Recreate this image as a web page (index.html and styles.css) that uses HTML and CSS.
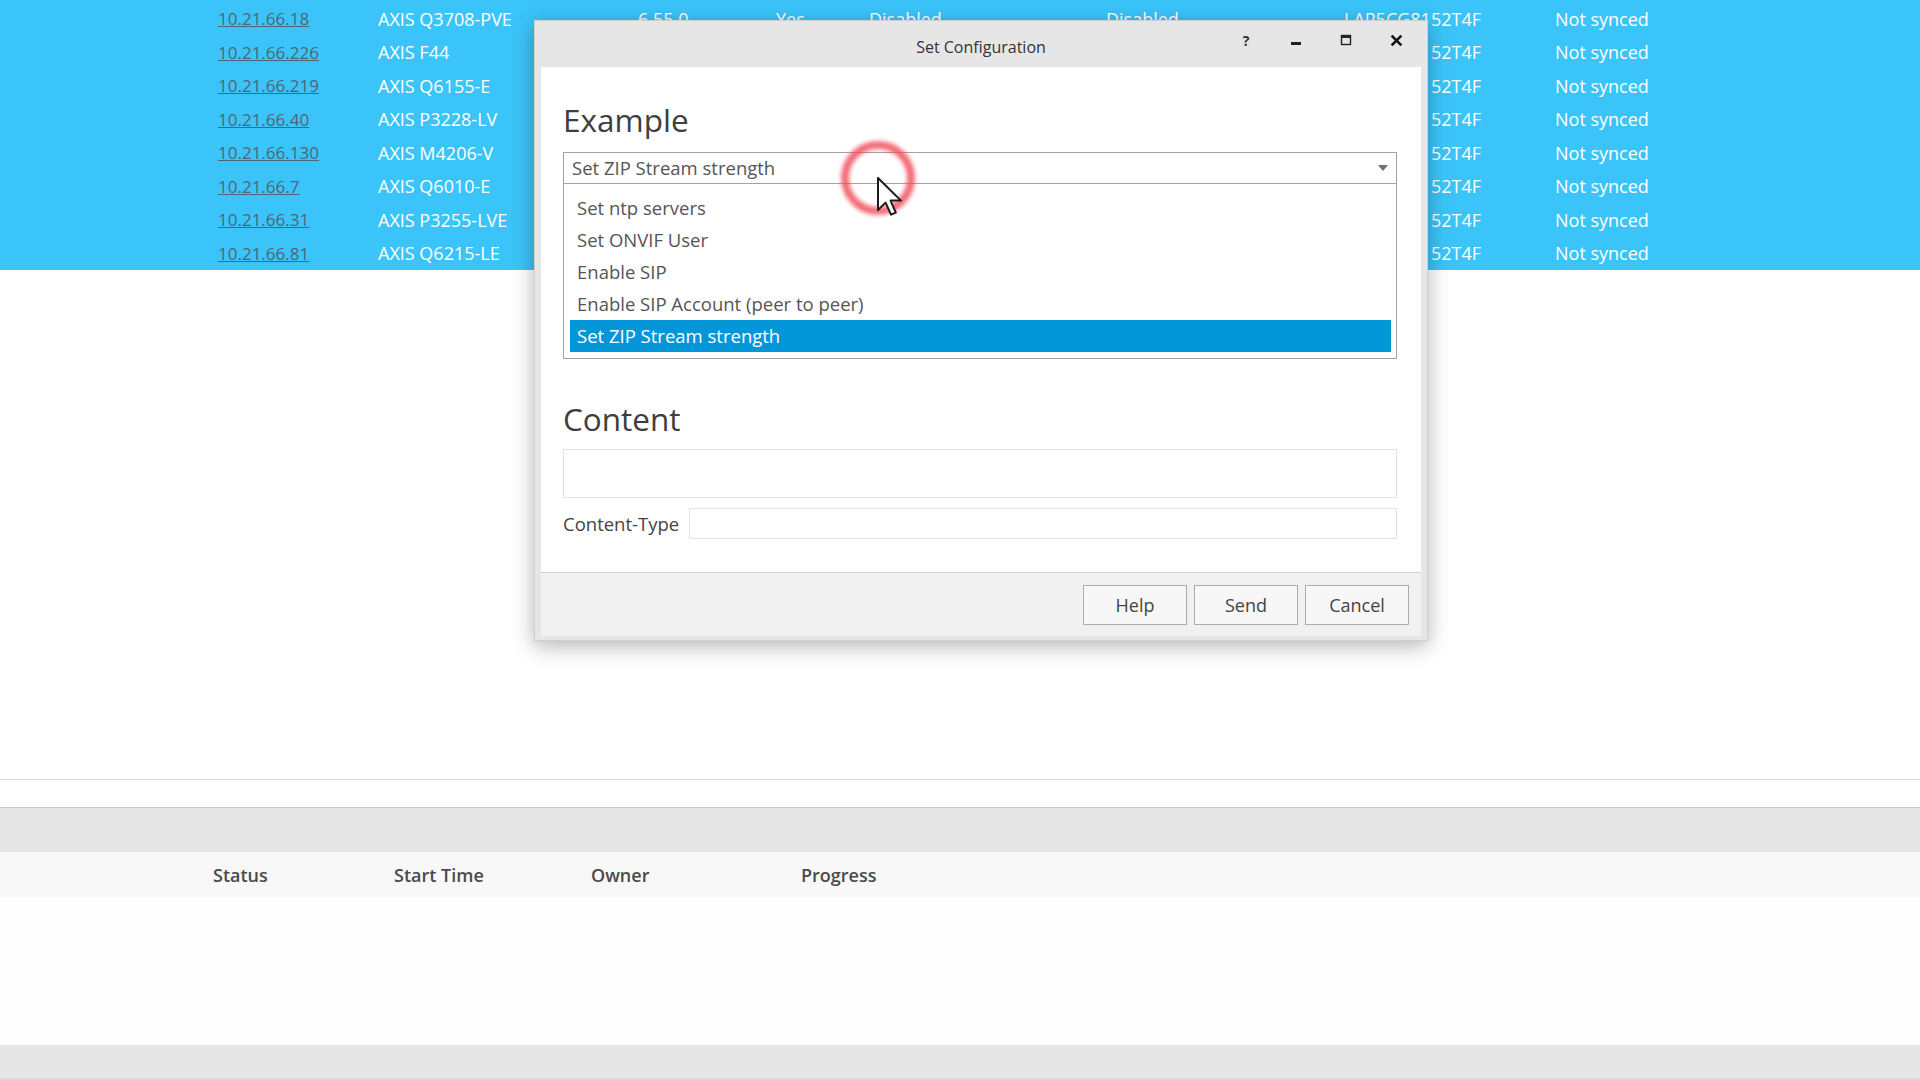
FILE: index.html
```html
<!DOCTYPE html>
<html lang="en">
<head>
    <meta charset="UTF-8">
    <meta name="viewport" content="width=device-width, initial-scale=1.0">
    <title>Device Manager - Set Configuration</title>
    <link rel="stylesheet" href="styles.css">
</head>
<body>
    <div class="app">
        <div class="devices">
            <div class="row">
                <a class="ip">10.21.66.18</a><span>AXIS Q3708-PVE</span><span>6.55.0</span><span>Yes</span><span>Disabled</span><span>Disabled</span><span>LAP5CG8152T4F</span><span>Not synced</span>
            </div>
            <div class="row">
                <a class="ip">10.21.66.226</a><span>AXIS F44</span><span>6.55.0</span><span>Yes</span><span>Disabled</span><span>Disabled</span><span>LAP5CG8152T4F</span><span>Not synced</span>
            </div>
            <div class="row">
                <a class="ip">10.21.66.219</a><span>AXIS Q6155-E</span><span>6.55.0</span><span>Yes</span><span>Disabled</span><span>Disabled</span><span>LAP5CG8152T4F</span><span>Not synced</span>
            </div>
            <div class="row">
                <a class="ip">10.21.66.40</a><span>AXIS P3228-LV</span><span>6.55.0</span><span>Yes</span><span>Disabled</span><span>Disabled</span><span>LAP5CG8152T4F</span><span>Not synced</span>
            </div>
            <div class="row">
                <a class="ip">10.21.66.130</a><span>AXIS M4206-V</span><span>6.55.0</span><span>Yes</span><span>Disabled</span><span>Disabled</span><span>LAP5CG8152T4F</span><span>Not synced</span>
            </div>
            <div class="row">
                <a class="ip">10.21.66.7</a><span>AXIS Q6010-E</span><span>6.55.0</span><span>Yes</span><span>Disabled</span><span>Disabled</span><span>LAP5CG8152T4F</span><span>Not synced</span>
            </div>
            <div class="row">
                <a class="ip">10.21.66.31</a><span>AXIS P3255-LVE</span><span>6.55.0</span><span>Yes</span><span>Disabled</span><span>Disabled</span><span>LAP5CG8152T4F</span><span>Not synced</span>
            </div>
            <div class="row">
                <a class="ip">10.21.66.81</a><span>AXIS Q6215-LE</span><span>6.55.0</span><span>Yes</span><span>Disabled</span><span>Disabled</span><span>LAP5CG8152T4F</span><span>Not synced</span>
            </div>
        </div>
        <div class="blank"></div>
        <div class="gap"></div>
        <div class="toolbar"></div>
        <div class="jobs-header">
            <span>Status</span><span>Start Time</span><span>Owner</span><span>Progress</span>
        </div>
        <div class="jobs-body"></div>
        <div class="statusbar"></div>
    </div>

    <div class="dialog">
        <div class="titlebar">
            <span class="title">Set Configuration</span>
            <div class="title-buttons">
                <span class="tb-btn tb-help">?</span>
                <span class="tb-btn">
                    <svg width="12" height="12" viewBox="0 0 12 12"><rect x="1" y="8" width="10" height="3" fill="#222"/></svg>
                </span>
                <span class="tb-btn">
                    <svg width="12" height="12" viewBox="0 0 12 12"><rect x="1.5" y="1.5" width="9" height="9" fill="none" stroke="#222" stroke-width="1.4"/><rect x="1" y="1" width="10" height="3" fill="#222"/></svg>
                </span>
                <span class="tb-btn">
                    <svg width="13" height="13" viewBox="0 0 12 12"><path d="M1.5 1.5 L10.5 10.5 M10.5 1.5 L1.5 10.5" stroke="#111" stroke-width="2.4"/></svg>
                </span>
            </div>
        </div>
        <div class="dlg-body">
            <h2>Example</h2>
            <div class="combo">
                <span>Set ZIP Stream strength</span>
                <svg class="combo-arrow" width="10" height="6" viewBox="0 0 10 6"><path d="M0 0 L10 0 L5 6 Z" fill="#707070"/></svg>
            </div>
            <ul class="combo-list">
                <li>Set ntp servers</li>
                <li>Set ONVIF User</li>
                <li>Enable SIP</li>
                <li>Enable SIP Account (peer to peer)</li>
                <li class="selected">Set ZIP Stream strength</li>
            </ul>
            <h2 class="content-heading">Content</h2>
            <div class="textarea"></div>
            <div class="field">
                <label>Content-Type</label>
                <div class="input"></div>
            </div>
        </div>
        <div class="dlg-footer">
            <button>Help</button>
            <button>Send</button>
            <button>Cancel</button>
        </div>
    </div>

    <div class="pointer">
        <div class="ring"></div>
        <svg class="arrow" width="26" height="40" viewBox="0 0 13 20">
            <path d="M0.5 0.5 L0.5 16.5 L4.3 12.8 L7 18.8 L9.4 17.8 L6.8 11.8 L12 11.8 Z" fill="#fff" stroke="#1a1a1a" stroke-width="1" stroke-linejoin="round"/>
        </svg>
    </div>
</body>
</html>
```

FILE: styles.css
```css
body {
    margin: 0;
    font-family: 'Open Sans', 'Noto Sans', Arial, sans-serif;
    background: #fff;
    color: #444;
    overflow: hidden;
}
.app {
    width: 1920px;
    height: 1080px;
    display: flex;
    flex-direction: column;
}
.devices {
    height: 268px;
    padding-top: 2px;
    background: #3bc4f9;
}
.row {
    display: grid;
    grid-template-columns: 160px 260px 138px 93px 237px 238px 211px auto;
    height: 33.5px;
    align-items: center;
    padding-left: 218px;
    font-size: 18px;
    color: #fff;
    white-space: nowrap;
}
.ip {
    color: #4d6677;
    text-decoration: underline;
    font-size: 17px;
}
.blank {
    height: 509px;
    border-bottom: 1px solid #d6d6d6;
}
.gap {
    height: 27px;
    border-bottom: 1px solid #c6c6c6;
}
.toolbar {
    height: 44px;
    background: #e6e6e6;
}
.jobs-header {
    height: 45px;
    background: #f8f8f8;
    display: flex;
    align-items: center;
    font-size: 18px;
    font-weight: 600;
    color: #4a4a4a;
}
.jobs-header span:nth-child(1) { margin-left: 213px; width: 181px; }
.jobs-header span:nth-child(2) { width: 197px; }
.jobs-header span:nth-child(3) { width: 210px; }
.jobs-body {
    height: 148px;
    background: #fefefe;
}
.statusbar {
    flex: 1;
    background: #e6e6e6;
    border-bottom: 2px solid #d8d8d8;
}

/* dialog */
.dialog {
    position: absolute;
    left: 534px;
    top: 20px;
    width: 880px;
    padding: 0 6px 4px 6px;
    background: #e6e6e6;
    border: 1px solid #cfcfcf;
    box-shadow: 0 5px 20px rgba(0,0,0,0.3);
}
.titlebar {
    height: 46px;
    display: flex;
    align-items: center;
    justify-content: center;
    position: relative;
}
.title {
    font-size: 16px;
    color: #333;
    margin-top: 5px;
}
.title-buttons {
    position: absolute;
    right: 0;
    top: 9px;
    display: flex;
    align-items: center;
}
.tb-btn {
    width: 50px;
    height: 20px;
    display: flex;
    align-items: center;
    justify-content: center;
}
.tb-help {
    font-size: 14px;
    font-weight: 700;
    color: #333;
}
.dlg-body {
    background: #fff;
    padding: 33px 24px 33px 22px;
}
h2 {
    margin: 0;
    height: 40px;
    line-height: 40px;
    font-size: 31.5px;
    font-weight: 400;
    color: #3e3e3e;
}
.combo {
    margin-top: 12px;
    height: 30px;
    border: 1px solid #a3a3a3;
    display: flex;
    align-items: center;
    justify-content: space-between;
    padding: 0 8px;
    font-size: 18.5px;
    color: #555;
}
.combo span {
    margin-top: -2px;
}
.combo-list {
    list-style: none;
    margin: 0;
    padding: 8px 5px 6px 6px;
    border: 1px solid #a3a3a3;
    border-top: none;
    font-size: 18.5px;
    color: #555;
}
.combo-list li {
    height: 32px;
    line-height: 32px;
    padding-left: 7px;
}
.combo-list li.selected {
    background: #0296d8;
    color: #fff;
}
.content-heading {
    margin-top: 40px;
}
.textarea {
    margin-top: 10px;
    height: 47px;
    border: 1px solid #e2e2e2;
}
.field {
    margin-top: 10px;
    display: flex;
    align-items: center;
}
.field label {
    width: 126px;
    font-size: 18.5px;
    color: #444;
}
.input {
    flex: 1;
    height: 29px;
    border: 1px solid #e2e2e2;
}
.dlg-footer {
    background: #f1f1f1;
    border-top: 1px solid #d0d0d0;
    height: 63px;
    display: flex;
    align-items: center;
    justify-content: flex-end;
    gap: 7px;
    padding-right: 12px;
}
.dlg-footer button {
    width: 104px;
    height: 40px;
    background: #f7f7f7;
    border: 1px solid #adadad;
    font-family: inherit;
    font-size: 18px;
    color: #444;
}

/* recorded mouse pointer */
.pointer {
    position: absolute;
    left: 841px;
    top: 141px;
    width: 74px;
    height: 74px;
}
.ring {
    width: 58px;
    height: 58px;
    border-radius: 50%;
    border: 8px solid rgba(240, 70, 85, 0.8);
    filter: blur(2px);
}
.arrow {
    position: absolute;
    left: 36px;
    top: 36px;
}
```
